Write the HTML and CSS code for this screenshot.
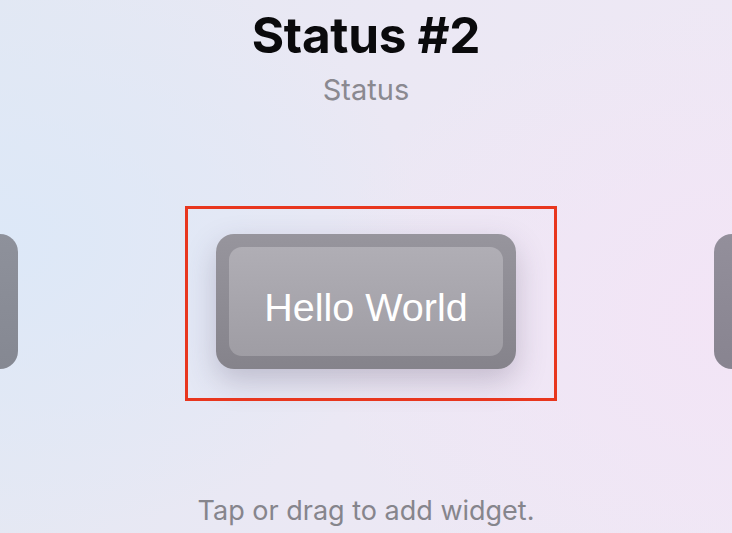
FILE: index.html
```html
<!DOCTYPE html>
<html lang="en">
<head>
<meta charset="utf-8">
<title>Status #2</title>
<link rel="stylesheet" href="styles.css">
</head>
<body>
<main class="screen">
  <header class="heading">
    <h1 class="title">Status #2</h1>
    <p class="subtitle">Status</p>
  </header>
  <section class="carousel">
    <div class="peek peek-left"></div>
    <div class="widget">
      <div class="widget-inner">Hello World</div>
      <div class="selection"></div>
    </div>
    <div class="peek peek-right"></div>
  </section>
  <p class="hint">Tap or drag to add widget.</p>
</main>
</body>
</html>
```

FILE: styles.css
```css
html, body {
  margin: 0;
  padding: 0;
  width: 732px;
  height: 533px;
  overflow: hidden;
}

body {
  font-family: Inter, "Liberation Sans", sans-serif;
  background:
    radial-gradient(ellipse 420px 300px at 0% 45%, rgba(220, 232, 248, 0.9), rgba(220, 232, 248, 0) 100%),
    radial-gradient(ellipse 420px 320px at 100% 60%, rgba(243, 228, 246, 0.9), rgba(243, 228, 246, 0) 100%),
    linear-gradient(100deg, #e3e8f3 0%, #ebe8f4 50%, #efe8f5 100%);
}

.screen {
  display: flex;
  flex-direction: column;
  align-items: center;
  height: 533px;
}

.heading {
  display: flex;
  flex-direction: column;
  align-items: center;
  padding-top: 10px;
}

.title {
  margin: 0;
  font-size: 49.5px;
  line-height: 50px;
  font-weight: 700;
  color: #0a0a0c;
  letter-spacing: -0.3px;
}

.subtitle {
  margin: 15px 0 0;
  font-size: 29px;
  line-height: 30px;
  font-weight: 400;
  color: #8a8990;
}

.carousel {
  display: flex;
  justify-content: space-between;
  align-items: flex-start;
  margin-top: 129px;
  width: 732px;
}

.peek {
  width: 18px;
  height: 135px;
}

.peek-left {
  border-radius: 0 18px 18px 0;
  background: linear-gradient(180deg, #8e919b 0%, #858892 100%);
}

.peek-right {
  border-radius: 18px 0 0 18px;
  background: linear-gradient(180deg, #938f9b 0%, #888490 100%);
}

.widget {
  position: relative;
  width: 300px;
  box-sizing: border-box;
  height: 135px;
  padding: 13px;
  border-radius: 18px;
  background: linear-gradient(180deg, #97959d 0%, #85838b 100%);
  box-shadow: 0 12px 30px rgba(70, 60, 90, 0.25);
}

.widget-inner {
  display: flex;
  align-items: center;
  justify-content: center;
  height: 100%;
  border-radius: 13px;
  background: linear-gradient(180deg, #b0aeb5 0%, #9f9da4 100%);
  color: #ffffff;
  font-family: "Liberation Sans", Arial, sans-serif;
  font-size: 39.5px;
  padding-top: 12px;
  box-sizing: border-box;
}

.selection {
  position: absolute;
  top: -28px;
  right: -41px;
  bottom: -32px;
  left: -31px;
  border: 3px solid #e8361e;
  pointer-events: none;
}

.hint {
  margin: 127px 0 0;
  font-size: 27px;
  line-height: 30px;
  color: #86858c;
}
```
